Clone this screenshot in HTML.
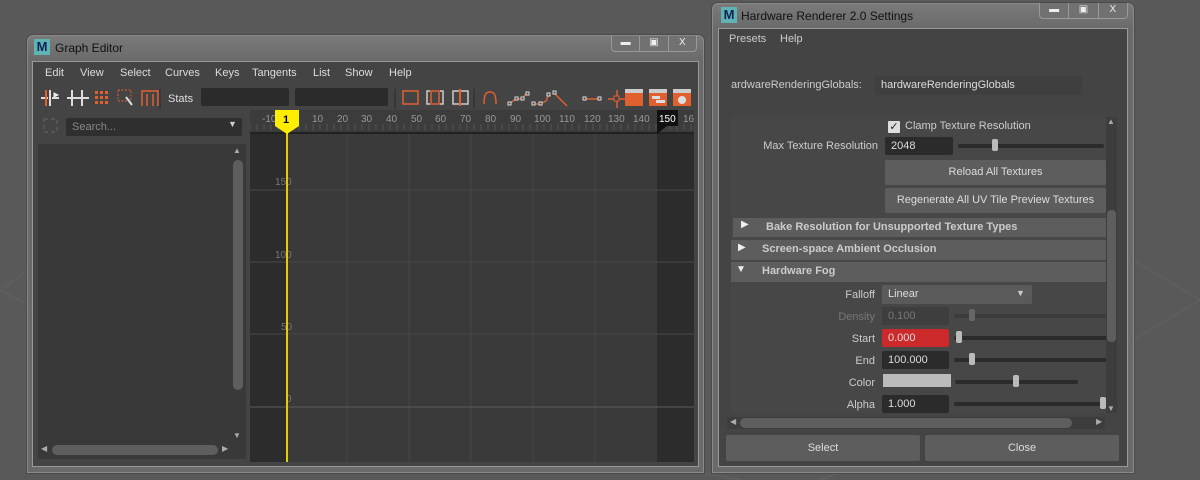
<!DOCTYPE html>
<html><head><style>
*{margin:0;padding:0;box-sizing:border-box}
body{width:1200px;height:480px;background:#595959;position:relative;overflow:hidden;font-family:"Liberation Sans","DejaVu Sans",sans-serif;font-size:11px;color:#ccc}
.a{position:absolute}
.win{position:absolute;background:linear-gradient(#7a7a7a,#6a6a6a 25px,#6a6a6a);border:1px solid #8a8a8a;border-radius:6px 6px 0 0;box-shadow:0 0 0 1px #4a4a4a}
.title{position:absolute;font-size:12px;color:#111}
.logo{position:absolute;width:16px;height:16px;background:#5fb3b3;color:#125;font-weight:bold;font-size:13px;text-align:center;line-height:16px}
.ctl{position:absolute;height:16px;border:1px solid #999;border-top:none;border-radius:0 0 4px 4px;background:#717171;display:flex}
.ctl span{flex:1;border-right:1px solid #999;text-align:center;color:#eee;font-size:10px;line-height:14px}
.ctl span:last-child{border-right:none}
.inner{position:absolute;background:#444;border:1px solid #999}
.txt{position:absolute;white-space:nowrap}
.field{position:absolute;background:#2b2b2b;border-radius:2px;color:#ddd;padding-left:6px;line-height:18px}
.btn{position:absolute;background:#5d5d5d;color:#ddd;text-align:center;border-radius:2px}
.slider{position:absolute;height:4px;background:#2b2b2b;border-radius:2px}
.knob{position:absolute;width:6px;height:12px;background:#bbb;border-radius:2px}
.hdr{position:absolute;background:#5d5d5d;color:#ccc;font-weight:bold;line-height:19px}
.lab{position:absolute;text-align:right;color:#ccc;width:140px}
</style></head><body>
<svg class="a" style="left:0;top:0" width="1200" height="480"><g stroke="#626262" stroke-width="1" fill="none">
<path d="M0 290 L28 270 M0 290 L28 305 M1200 300 L1133 260 M1200 300 L1133 340 M700 472 L740 480 M820 480 L840 472"/></g></svg>

<!-- Graph Editor -->
<div class="win" style="left:27px;top:35px;width:677px;height:438px"></div>
<div class="logo" style="left:34px;top:39px">M</div>
<div class="title" style="left:55px;top:41px">Graph Editor</div>
<div class="ctl" style="left:611px;top:36px;width:86px"><span>▬</span><span>▣</span><span>X</span></div>
<div class="inner" style="left:32px;top:61px;width:667px;height:406px"></div>
<div class="txt" style="left:45px;top:67px;color:#ddd">Edit</div>
<div class="txt" style="left:80px;top:67px;color:#ddd">View</div>
<div class="txt" style="left:120px;top:67px;color:#ddd">Select</div>
<div class="txt" style="left:165px;top:67px;color:#ddd">Curves</div>
<div class="txt" style="left:215px;top:67px;color:#ddd">Keys</div>
<div class="txt" style="left:252px;top:67px;color:#ddd">Tangents</div>
<div class="txt" style="left:313px;top:67px;color:#ddd">List</div>
<div class="txt" style="left:345px;top:67px;color:#ddd">Show</div>
<div class="txt" style="left:389px;top:67px;color:#ddd">Help</div>
<svg class="a" style="left:38px;top:87px" width="660" height="22">
<g fill="none" stroke-width="2">
<path d="M3 11h7M8 3v16M12 3v16M14 11h7" stroke="#ddd"/><path d="M8 3v16" stroke="#e06030"/><path d="M16 6l4 2-4 2z" fill="#eee" stroke="#eee" stroke-width="1"/>
<path d="M29 11h22M34 3v16M44 3v16" stroke="#ddd"/>
</g>
<g fill="#e06030"><rect x="57" y="4" width="3" height="3"/><rect x="62" y="4" width="3" height="3"/><rect x="67" y="4" width="3" height="3"/><rect x="57" y="9" width="3" height="3"/><rect x="62" y="9" width="3" height="3"/><rect x="67" y="9" width="3" height="3"/><rect x="57" y="14" width="3" height="3"/><rect x="62" y="14" width="3" height="3"/><rect x="67" y="14" width="3" height="3"/></g>
<rect x="80" y="3" width="13" height="11" fill="none" stroke="#e06030" stroke-dasharray="2 1.5"/><path d="M88 10l6 8" stroke="#ddd" stroke-width="2"/>
<path d="M104 19V4h16v15M109 7v12M115 7v12" fill="none" stroke="#e06030" stroke-width="1.5"/>
<path d="M122 2v20" stroke="#2a2a2a"/>
<text x="130" y="15" fill="#ddd" font-size="11" font-family="Liberation Sans">Stats</text>
<rect x="163" y="1" width="88" height="18" fill="#2b2b2b" rx="2"/>
<rect x="257" y="1" width="93" height="18" fill="#2b2b2b" rx="2"/>
<path d="M357 2v20" stroke="#2a2a2a"/>
<rect x="365" y="4" width="15" height="13" fill="none" stroke="#e06030" stroke-width="1.5"/>
<path d="M392 4h-3v13h3M402 4h3v13h-3" fill="none" stroke="#ccc" stroke-width="1.5"/><rect x="393" y="4" width="8" height="13" fill="none" stroke="#e06030" stroke-width="1.5"/>
<rect x="415" y="4" width="15" height="13" fill="none" stroke="#ccc" stroke-width="1.5"/><path d="M422 2v17" stroke="#e06030" stroke-width="2"/>
<path d="M436 2v20" stroke="#2a2a2a"/>
<path d="M446 17c0-10 2-12 6-12s6 2 6 12" fill="none" stroke="#e06030" stroke-width="1.5"/>
<path d="M472 16l6-4 6 0 4-5M495 17h7l6-3 2-5M516 6l13 13M548 12h12M570 12h18M579 3v18" fill="none" stroke="#e06030" stroke-width="1.5"/>
<g fill="#444" stroke="#ddd"><rect x="470" y="15" width="3" height="3"/><rect x="477" y="10" width="3" height="3"/><rect x="483" y="10" width="3" height="3"/><rect x="488" y="5" width="3" height="3"/><rect x="494" y="15" width="3" height="3"/><rect x="501" y="15" width="3" height="3"/><rect x="509" y="6" width="3" height="3"/><rect x="515" y="4" width="3" height="3"/><rect x="545" y="10" width="3" height="3"/><rect x="560" y="10" width="3" height="3"/><rect x="576" y="9" width="5" height="5" stroke="#e06030"/></g>
<rect x="587" y="2" width="18" height="17" fill="#e06030"/><rect x="587" y="2" width="18" height="4" fill="#ccc"/>
<rect x="611" y="2" width="18" height="17" fill="#e06030"/><rect x="611" y="2" width="18" height="4" fill="#ccc"/><rect x="614" y="9" width="8" height="3" fill="#ddd"/><rect x="618" y="13" width="9" height="3" fill="#ddd"/>
<rect x="635" y="2" width="18" height="17" fill="#e06030"/><rect x="635" y="2" width="18" height="4" fill="#ccc"/><circle cx="644" cy="13" r="4" fill="#ddd"/>
</svg>
<svg class="a" style="left:42px;top:117px" width="18" height="18"><rect x="2" y="2" width="13" height="13" fill="none" stroke="#555" stroke-width="2" stroke-dasharray="4 3"/></svg>
<div class="field" style="left:66px;top:118px;width:176px;height:18px;background:#2f2f2f;color:#888;line-height:18px">Search...</div>
<div class="txt" style="left:228px;top:119px;color:#ccc;font-size:9px">▼</div>
<div class="a" style="left:38px;top:144px;width:208px;height:315px;background:#393939"></div>
<div class="a" style="left:233px;top:160px;width:10px;height:230px;background:#5e5e5e;border-radius:5px"></div>
<div class="txt" style="left:233px;top:146px;font-size:8px;color:#aaa">▲</div>
<div class="txt" style="left:233px;top:431px;font-size:8px;color:#aaa">▼</div>
<div class="a" style="left:52px;top:445px;width:166px;height:10px;background:#5e5e5e;border-radius:5px"></div>
<div class="txt" style="left:41px;top:444px;font-size:8px;color:#aaa">◀</div>
<div class="txt" style="left:222px;top:444px;font-size:8px;color:#aaa">▶</div>
<div class="a" style="left:250px;top:110px;width:444px;height:352px;background:#3a3a3a"></div>
<div class="a" style="left:250px;top:134px;width:37px;height:328px;background:#2c2c2c"></div>
<div class="a" style="left:657px;top:134px;width:37px;height:328px;background:#2c2c2c"></div>
<svg class="a" style="left:250px;top:110px" width="444" height="352">
<rect x="0" y="0" width="444" height="24" fill="#3c3c3c"/>
<rect x="0" y="22" width="444" height="2" fill="#222"/>
<g stroke="#474747" stroke-width="1">
<path d="M97 24v328M159 24v328M221 24v328M283 24v328M345 24v328M0 80h444M0 152h444M0 224h444"/>
</g>
<path d="M0 297h444" stroke="#5c5c5c"/>
<g stroke="#555"><path d="M0 14v6M7 14v6M14 14v6M21 14v6M28 14v6M35 14v6M42 14v6M49 14v6M56 14v6M63 14v6M70 14v6M77 14v6M84 14v6M91 14v6M98 14v6M105 14v6M112 14v6M119 14v6M126 14v6M133 14v6M140 14v6M147 14v6M154 14v6M161 14v6M168 14v6M175 14v6M182 14v6M189 14v6M196 14v6M203 14v6M210 14v6M217 14v6M224 14v6M231 14v6M238 14v6M245 14v6M252 14v6M259 14v6M266 14v6M273 14v6M280 14v6M287 14v6M294 14v6M301 14v6M308 14v6M315 14v6M322 14v6M329 14v6M336 14v6M343 14v6M350 14v6M357 14v6M364 14v6M371 14v6M378 14v6M385 14v6M392 14v6M399 14v6M406 14v6M413 14v6M420 14v6M427 14v6M434 14v6M441 14v6"/></g>
<g fill="#999" font-size="10" font-family="Liberation Sans">
<text x="12" y="12">-10</text><text x="62" y="12">10</text><text x="87" y="12">20</text><text x="111" y="12">30</text><text x="136" y="12">40</text><text x="161" y="12">50</text><text x="185" y="12">60</text><text x="210" y="12">70</text><text x="235" y="12">80</text><text x="260" y="12">90</text><text x="284" y="12">100</text><text x="309" y="12">110</text><text x="334" y="12">120</text><text x="358" y="12">130</text><text x="383" y="12">140</text><text x="433" y="12">160</text></g>
<g fill="#777" font-size="10" font-family="Liberation Sans">
<text x="25" y="75">150</text><text x="25" y="148">100</text><text x="31" y="220">50</text><text x="36" y="292">0</text></g>
<rect x="407" y="0" width="21" height="16" fill="#111"/><path d="M407 16h10l-10 8z" fill="#111"/><text x="409" y="12" fill="#fff" font-size="10" font-family="Liberation Sans">150</text>
<path d="M37 0v352" stroke="#e0d000" stroke-width="2"/>
<path d="M25 0h24v16l-12 8-12-8z" fill="#ffee00"/>
<text x="33" y="13" fill="#000" font-size="11" font-weight="bold" font-family="Liberation Sans">1</text>
</svg>

<!-- Hardware Renderer -->
<div class="win" style="left:712px;top:3px;width:422px;height:470px"></div>
<div class="logo" style="left:721px;top:7px">M</div>
<div class="title" style="left:741px;top:9px">Hardware Renderer 2.0 Settings</div>
<div class="ctl" style="left:1039px;top:3px;width:89px"><span>▬</span><span>▣</span><span>X</span></div>
<div class="inner" style="left:718px;top:28px;width:410px;height:439px"></div>
<div class="txt" style="left:729px;top:33px">Presets</div>
<div class="txt" style="left:780px;top:33px">Help</div>
<div class="txt" style="left:731px;top:79px">ardwareRenderingGlobals:</div>
<div class="field" style="left:875px;top:76px;width:207px;height:19px;background:#3f3f3f;color:#ddd">hardwareRenderingGlobals</div>
<div class="a" style="left:731px;top:117px;width:384px;height:296px;background:#474747;overflow:hidden">
  <div class="a" style="left:157px;top:4px;width:12px;height:12px;background:#ddd;border-radius:1px;color:#222;font-size:11px;line-height:12px;text-align:center;font-weight:bold">✓</div>
  <div class="txt" style="left:174px;top:3px">Clamp Texture Resolution</div>
  <div class="lab" style="left:7px;top:23px">Max Texture Resolution</div>
  <div class="field" style="left:154px;top:20px;width:68px;height:18px">2048</div>
  <div class="slider" style="left:227px;top:27px;width:146px"></div><div class="knob" style="left:261px;top:22px"></div>
  <div class="btn" style="left:154px;top:43px;width:221px;height:25px;line-height:25px">Reload All Textures</div>
  <div class="btn" style="left:154px;top:71px;width:221px;height:25px;line-height:25px">Regenerate All UV Tile Preview Textures</div>
  <div class="hdr" style="left:2px;top:101px;width:373px;height:19px;padding-left:33px">Bake Resolution for Unsupported Texture Types</div>
  <div class="txt" style="left:10px;top:102px;color:#eee;font-size:10px">▶</div>
  <div class="hdr" style="left:-2px;top:123px;width:377px;height:20px;padding-left:33px">Screen-space Ambient Occlusion</div>
  <div class="txt" style="left:7px;top:125px;color:#eee;font-size:10px">▶</div>
  <div class="hdr" style="left:-2px;top:145px;width:377px;height:20px;padding-left:33px">Hardware Fog</div>
  <div class="txt" style="left:5px;top:147px;color:#eee;font-size:10px">▼</div>
  <div class="lab" style="left:4px;top:172px">Falloff</div>
  <div class="field" style="left:151px;top:168px;width:150px;height:19px;background:#5a5a5a">Linear</div>
  <div class="txt" style="left:285px;top:171px;font-size:9px">▼</div>
  <div class="lab" style="left:4px;top:194px;color:#777">Density</div>
  <div class="field" style="left:151px;top:190px;width:67px;height:18px;background:#3e3e3e;color:#777">0.100</div>
  <div class="slider" style="left:223px;top:197px;width:160px;background:#3c3c3c"></div><div class="knob" style="left:238px;top:192px;background:#666"></div>
  <div class="lab" style="left:4px;top:216px">Start</div>
  <div class="field" style="left:151px;top:212px;width:67px;height:18px;background:#cc2a2a">0.000</div>
  <div class="slider" style="left:223px;top:219px;width:160px"></div><div class="knob" style="left:225px;top:214px"></div>
  <div class="lab" style="left:4px;top:238px">End</div>
  <div class="field" style="left:151px;top:234px;width:67px;height:18px">100.000</div>
  <div class="slider" style="left:223px;top:241px;width:160px"></div><div class="knob" style="left:238px;top:236px"></div>
  <div class="lab" style="left:4px;top:260px">Color</div>
  <div class="a" style="left:152px;top:257px;width:68px;height:13px;background:#bbb"></div>
  <div class="slider" style="left:224px;top:263px;width:123px"></div><div class="knob" style="left:282px;top:258px"></div>
  <div class="lab" style="left:4px;top:282px">Alpha</div>
  <div class="field" style="left:151px;top:278px;width:67px;height:18px">1.000</div>
  <div class="slider" style="left:223px;top:285px;width:160px"></div><div class="knob" style="left:369px;top:280px"></div>
</div>
<div class="a" style="left:1106px;top:117px;width:11px;height:296px;background:#3d3d3d"></div>
<div class="a" style="left:1107px;top:210px;width:9px;height:132px;background:#5e5e5e;border-radius:4px"></div>
<div class="txt" style="left:1107px;top:117px;font-size:8px;color:#aaa">▲</div>
<div class="txt" style="left:1107px;top:404px;font-size:8px;color:#aaa">▼</div>
<div class="a" style="left:727px;top:417px;width:378px;height:12px;background:#3d3d3d"></div>
<div class="a" style="left:740px;top:418px;width:332px;height:10px;background:#5e5e5e;border-radius:5px"></div>
<div class="txt" style="left:730px;top:417px;font-size:8px;color:#aaa">◀</div>
<div class="txt" style="left:1096px;top:417px;font-size:8px;color:#aaa">▶</div>
<div class="btn" style="left:726px;top:435px;width:194px;height:26px;line-height:26px">Select</div>
<div class="btn" style="left:925px;top:435px;width:194px;height:26px;line-height:26px">Close</div>
</body></html>
